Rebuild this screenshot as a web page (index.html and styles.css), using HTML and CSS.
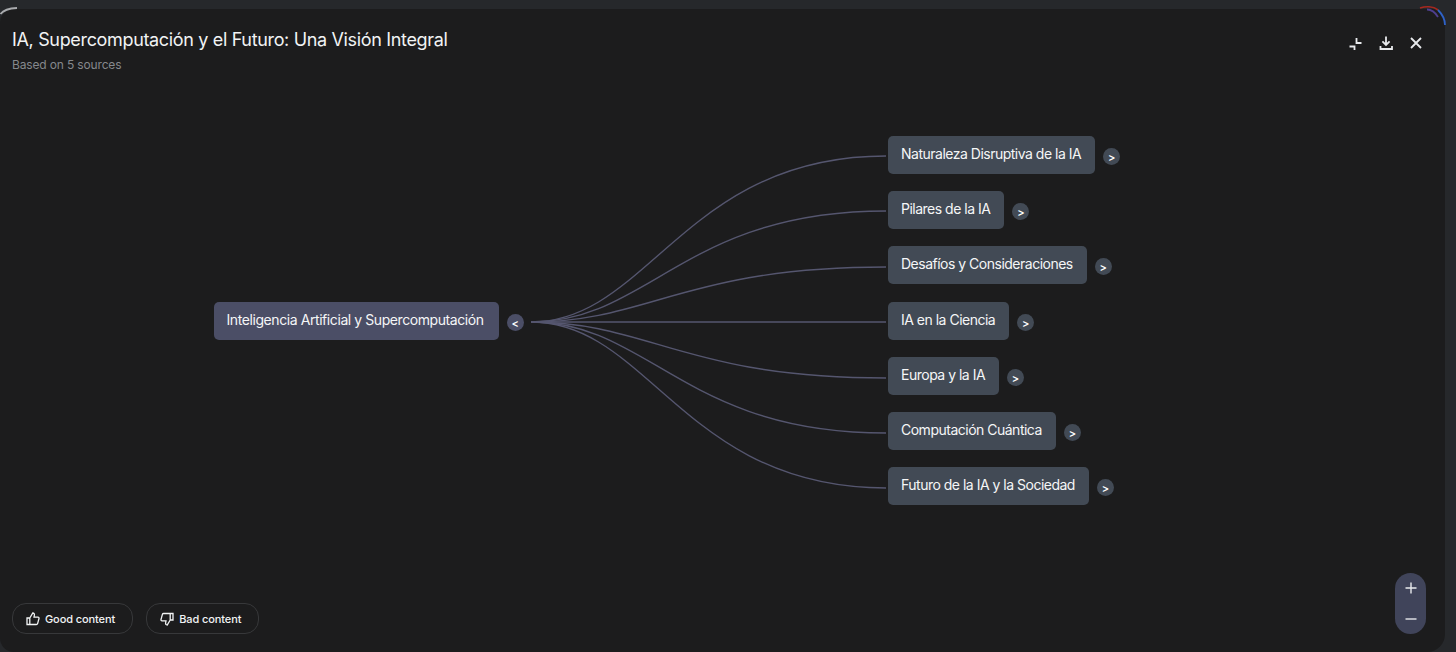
FILE: index.html
```html
<!DOCTYPE html>
<html lang="en">

<head>
    <meta charset="UTF-8">
    <title>Mind map</title>
    <link rel="stylesheet" href="styles.css">
</head>

<body>
    <div class="panel">
        <svg class="corner corner-left" width="20" height="12" viewBox="0 0 20 12">
            <path d="M0.5 7 C3 3.5 7 1.5 17 1" />
        </svg>
        <svg class="corner corner-right" width="26" height="20" viewBox="0 0 26 20">
            <path class="arc-red" d="M0 2 C5 0.5 13 0 18 4" />
            <path class="arc-purple" d="M7 3.5 C11 3.5 15 6 18 11" />
            <path class="arc-blue" d="M18 4 C22 8 25 12 25 19" />
        </svg>

        <header class="header">
            <div class="heading">
                <h1 class="title">IA, Supercomputación y el Futuro: Una Visión Integral</h1>
                <p class="subtitle">Based on 5 sources</p>
            </div>
            <div class="actions">
                <button class="icon-btn" aria-label="Collapse">
                    <svg width="16" height="16" viewBox="0 0 16 16">
                        <path d="M8.5 3 V8 H13.5 M1.5 11.5 H6.5 V15" />
                    </svg>
                </button>
                <button class="icon-btn" aria-label="Download">
                    <svg width="16" height="16" viewBox="0 0 16 16">
                        <path d="M8 1.5 V9 M4.4 6.4 L8 10 L11.6 6.4 M2.5 11 V14 H14 V11" />
                    </svg>
                </button>
                <button class="icon-btn" aria-label="Close">
                    <svg width="16" height="16" viewBox="0 0 16 16">
                        <path d="M3 3 L13 13 M13 3 L3 13" />
                    </svg>
                </button>
            </div>
        </header>

        <div class="map">
            <svg class="links" width="1445" height="643" viewBox="0 0 1445 643">
                <path d="M531 313 C649 313 684 147 886 147" />
                <path d="M531 313 C649 313 684 202 886 202" />
                <path d="M531 313 C649 313 684 258 886 258" />
                <path d="M531 313 H886" />
                <path d="M531 313 C649 313 684 369 886 369" />
                <path d="M531 313 C649 313 684 424 886 424" />
                <path d="M531 313 C649 313 684 479 886 479" />
            </svg>

            <div class="node node-root"><span class="label">Inteligencia Artificial y Supercomputación</span><span class="toggle">&lt;</span></div>
            <div class="node node-1"><span class="label">Naturaleza Disruptiva de la IA</span><span class="toggle">&gt;</span></div>
            <div class="node node-2"><span class="label">Pilares de la IA</span><span class="toggle">&gt;</span></div>
            <div class="node node-3"><span class="label">Desafíos y Consideraciones</span><span class="toggle">&gt;</span></div>
            <div class="node node-4"><span class="label">IA en la Ciencia</span><span class="toggle">&gt;</span></div>
            <div class="node node-5"><span class="label">Europa y la IA</span><span class="toggle">&gt;</span></div>
            <div class="node node-6"><span class="label">Computación Cuántica</span><span class="toggle">&gt;</span></div>
            <div class="node node-7"><span class="label">Futuro de la IA y la Sociedad</span><span class="toggle">&gt;</span></div>
        </div>

        <footer class="footer">
            <div class="feedback">
                <button class="pill">
                    <svg width="14" height="14" viewBox="0 0 14 14">
                        <path d="M1 6 H3.8 V12.5 H1 Z M3.8 6 L6.8 1 C8 1 8.6 1.8 8.4 3 L8 5.2 H12 C12.8 5.2 13.2 5.8 13 6.5 L11.6 11.6 C11.4 12.2 11 12.5 10.4 12.5 H3.8" />
                    </svg>
                    Good content
                </button>
                <button class="pill">
                    <svg width="14" height="14" viewBox="0 0 14 14">
                        <path d="M13 8 H10.2 V1.5 H13 Z M10.2 8 L7.2 13 C6 13 5.4 12.2 5.6 11 L6 8.8 H2 C1.2 8.8 0.8 8.2 1 7.5 L2.4 2.4 C2.6 1.8 3 1.5 3.6 1.5 H10.2" />
                    </svg>
                    Bad content
                </button>
            </div>
            <div class="zoom">
                <button class="zoom-btn" aria-label="Zoom in">
                    <svg width="12" height="12" viewBox="0 0 12 12"><path d="M6 0.5 V11.5 M0.5 6 H11.5" /></svg>
                </button>
                <button class="zoom-btn" aria-label="Zoom out">
                    <svg width="12" height="12" viewBox="0 0 12 12"><path d="M0.5 6 H11.5" /></svg>
                </button>
            </div>
        </footer>
    </div>
</body>

</html>
```
FILE: styles.css
```css
* {
    box-sizing: border-box;
}

html,
body {
    height: 100%;
}

body {
    margin: 0;
    padding: 9px 11px 0 0;
    overflow: hidden;
    background-color: #26282b;
    color: #fff;
    font-family: "Inter", "Liberation Sans", sans-serif;
}

.panel {
    position: relative;
    display: flex;
    flex-direction: column;
    height: 100%;
    background-color: #1c1c1d;
    border-radius: 14px 14px 18px 14px;
}

.corner {
    position: absolute;
    fill: none;
    stroke-width: 1.8;
    overflow: visible;
}

.corner-left {
    top: -2px;
    left: 0;
    stroke: #a9abae;
}

.corner-right {
    top: -3px;
    right: -1px;
}

.arc-red {
    stroke: #a5281f;
}

.arc-purple {
    stroke: #4f3f8f;
}

.arc-blue {
    stroke: #2f62c8;
}

.header {
    display: flex;
    justify-content: space-between;
    align-items: flex-start;
    padding: 19px 21px 0 12px;
}

.title {
    margin: 0;
    font-size: 18px;
    font-weight: 400;
    line-height: 24px;
    letter-spacing: -0.34px;
    color: #f1f3f4;
}

.subtitle {
    margin: 5px 0 0;
    font-size: 12px;
    line-height: 16px;
    letter-spacing: -0.15px;
    color: #85888c;
}

.actions {
    display: flex;
    gap: 14px;
    padding-top: 7px;
}

.icon-btn {
    display: flex;
    padding: 0;
    background: none;
    border: none;
}

.icon-btn svg {
    fill: none;
    stroke: #e8eaed;
    stroke-width: 1.8;
}

.map {
    position: absolute;
    top: 0;
    left: 0;
    width: 100%;
    height: 100%;
}

.links {
    position: absolute;
    top: 0;
    left: 0;
    fill: none;
    stroke: #55566f;
    stroke-width: 1.4;
}

.node {
    position: absolute;
    display: flex;
    align-items: center;
    gap: 8px;
}

.node-root {
    top: 293px;
    left: 214px;
}

.node-1 {
    top: 127px;
    left: 888px;
}

.node-2 {
    top: 182px;
    left: 888px;
}

.node-3 {
    top: 237px;
    left: 888px;
}

.node-4 {
    top: 293px;
    left: 888px;
}

.node-5 {
    top: 348px;
    left: 888px;
}

.node-6 {
    top: 403px;
    left: 888px;
}

.node-7 {
    top: 458px;
    left: 888px;
}

.label {
    padding: 0 14px 0 13px;
    height: 38px;
    line-height: 36px;
    font-size: 14px;
    letter-spacing: -0.5px;
    white-space: nowrap;
    color: #f5f6f7;
    background-color: #424a55;
    border-radius: 5px;
}

.node-root .label {
    padding: 0 15px 0 12.5px;
    letter-spacing: -0.42px;
    background-color: #4b4e66;
}

.toggle {
    display: flex;
    align-items: center;
    justify-content: center;
    width: 17px;
    height: 17px;
    margin-top: 3px;
    font-size: 11px;
    font-weight: 600;
    background-color: #424a55;
    border-radius: 50%;
}

.node-root .toggle {
    background-color: #4b4e66;
}

.footer {
    position: relative;
    display: flex;
    justify-content: space-between;
    align-items: flex-end;
    margin-top: auto;
    padding: 0 19px 18px 12px;
}

.feedback {
    display: flex;
    gap: 13px;
}

.pill {
    display: flex;
    align-items: center;
    gap: 5px;
    height: 31px;
    padding: 0 17px 0 13px;
    font-family: inherit;
    font-size: 11px;
    font-weight: 500;
    letter-spacing: -0.1px;
    color: #f1f3f4;
    background: none;
    border: 1px solid #37383a;
    border-radius: 14px;
}

.pill svg {
    fill: none;
    stroke: #f1f3f4;
    stroke-width: 1.3;
}

.zoom {
    display: flex;
    flex-direction: column;
    width: 31px;
    height: 61px;
    background-color: #40445a;
    border-radius: 16px;
}

.zoom-btn {
    display: flex;
    align-items: center;
    justify-content: center;
    flex: 1;
    padding: 0;
    background: none;
    border: none;
}

.zoom-btn svg {
    fill: none;
    stroke: #e8eaed;
    stroke-width: 1.4;
}
```
